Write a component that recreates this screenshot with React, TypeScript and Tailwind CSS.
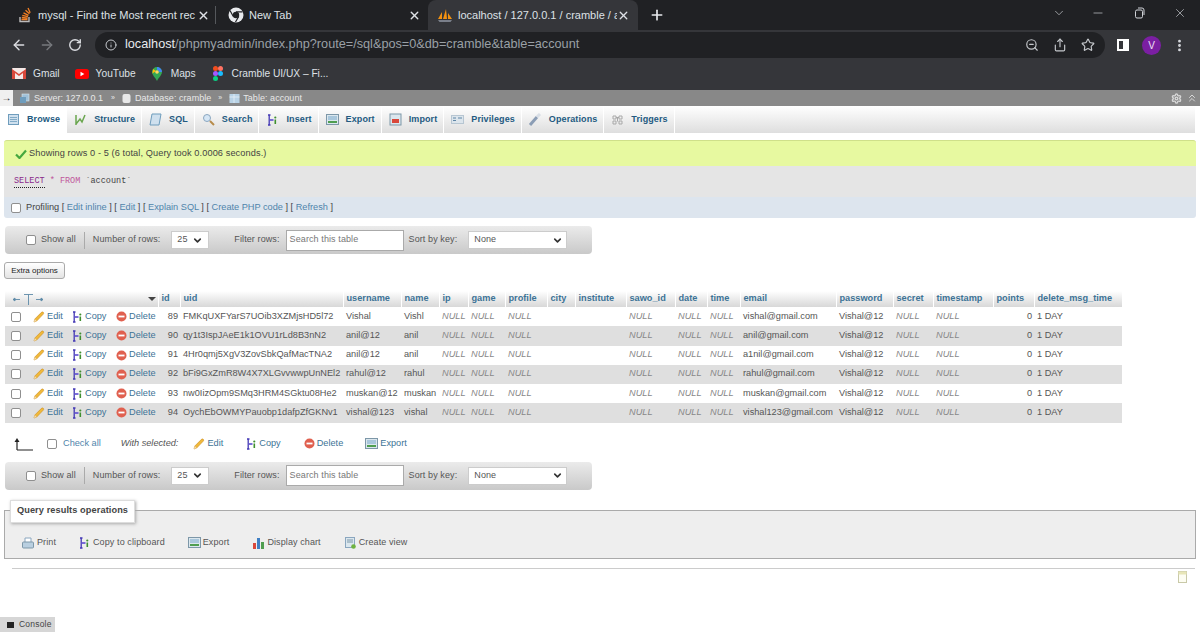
import React from "react";
import { ArrowLeft, ArrowRight, RotateCw, Info, ZoomOut, Share, Star, X, Plus, Minus, ChevronDown, EllipsisVertical, Settings, ChevronsUp } from "lucide-react";

const F = "font-['Liberation_Sans',Arial,sans-serif]";

const Pencil = () => (
  <svg width="12" height="12" viewBox="0 0 12 12" className="shrink-0">
    <path d="M1 11l.8-3L8.5 1.300c.6-.5 1.300-.5 1.800 0s.5 1.200 0 1.800L3.700 10z" fill="#f0b93a" stroke="#c98a1e" strokeWidth=".6" />
    <path d="M1 11l.8-3 1.900 2z" fill="#f3dcb0" />
  </svg>
);
const CopyI = () => (
  <svg width="11" height="12" viewBox="0 0 11 12" className="shrink-0">
    <path d="M1 1h2.500M1 11h2.500M2.200 1v10" stroke="#4338b5" strokeWidth="1.300" fill="none" />
    <path d="M3 6h3.500" stroke="#5a4ad0" strokeWidth="1.600" />
    <circle cx="8.300" cy="3.500" r="1.100" fill="#3f8f2f" />
    <path d="M8.300 5.500v4.500" stroke="#3f8f2f" strokeWidth="1.600" />
  </svg>
);
const Del = () => (
  <svg width="11" height="11" viewBox="0 0 11 11" className="shrink-0">
    <circle cx="5.500" cy="5.500" r="5" fill="#e0604f" />
    <rect x="2.500" y="4.600" width="6" height="1.800" fill="#fff" />
  </svg>
);
const ExportI = () => (
  <svg width="13" height="11" viewBox="0 0 13 11" className="shrink-0">
    <rect x=".5" y=".5" width="12" height="10" fill="#dbe7ee" stroke="#7d97a8" />
    <rect x="2" y="2" width="9" height="4" fill="#a9c7dc" />
    <rect x="2" y="7" width="9" height="2" fill="#4f9e50" />
  </svg>
);
const Box = () => <span className="block h-[10px] w-[10px] shrink-0 rounded-[2px] border border-[#8f8f8f] bg-white" />;

const Tab = ({ icon, label, w, active, iconCl, closeCl }: { icon: React.ReactNode; label: string; w: string; active?: boolean; iconCl: string; closeCl: string }) => (
  <div className={`flex h-full items-center ${w} ${active ? "rounded-t-lg bg-[#35363a]" : ""}`}>
    <span className={`flex shrink-0 ${iconCl}`}>{icon}</span>
    <span className="min-w-0 flex-1 overflow-hidden whitespace-nowrap text-[11px] text-[#dee1e6]">{label}</span>
    <X size={13} strokeWidth={2.500} className={`shrink-0 text-[#dee1e6] ${closeCl}`} />
  </div>
);

const MenuItem = ({ icon, label, active }: { icon: React.ReactNode; label: string; active?: boolean }) => (
  <div className={`flex h-full items-center gap-[7px] border-r border-[#fff] pl-[7px] pr-[6px] text-[9px] font-bold tracking-[0.1px] text-[#235a81] ${active ? "bg-white" : ""}`}>
    <span className="flex w-[13px] shrink-0 justify-center">{icon}</span>
    <span>{label}</span>
  </div>
);

const Sq = ({ c, b }: { c: string; b: string }) => (
  <svg width="13" height="13" viewBox="0 0 13 13" className="shrink-0">
    <rect x="1.500" y="1.500" width="10" height="10" fill={c} stroke={b} />
    <path d="M3 4.500h7M3 6.500h7M3 8.500h7" stroke={b} strokeWidth=".8" />
  </svg>
);

const NavBar = () => (
  <div className="flex h-[28px] w-[587px] items-center rounded-[4px] bg-gradient-to-b from-[#ebebeb] to-[#c9c9c9] text-[9px] tracking-[0.1px] text-[#555]">
    <span className="ml-[21px]"><Box /></span>
    <span className="ml-[5px]">Show all</span>
    <span className="ml-[8px] h-[17px] w-px bg-[#aaa]" />
    <span className="ml-[8px]">Number of rows:</span>
    <span className="ml-[11px] flex h-[18px] w-[38px] items-center justify-between border border-[#ccc] bg-white px-[5px]">25<ChevronDown size={11} strokeWidth={3.500} className="text-[#333]" /></span>
    <span className="ml-[25px]">Filter rows:</span>
    <span className="ml-[6px] flex h-[21px] w-[118px] items-center border border-[#aaa] bg-white px-[3px] text-[#777]">Search this table</span>
    <span className="ml-[5px]">Sort by key:</span>
    <span className="ml-[11px] flex h-[18px] w-[99px] items-center justify-between border border-[#ccc] bg-white pl-[5px] pr-[3px]">None<ChevronDown size={11} strokeWidth={3.500} className="text-[#333]" /></span>
  </div>
);

const cols = [
  ["id", 22], ["uid", 163], ["username", 58], ["name", 38], ["ip", 29], ["game", 37], ["profile", 42], ["city", 28], ["institute", 51],
  ["sawo_id", 49], ["date", 32], ["time", 33], ["email", 96], ["password", 57], ["secret", 40], ["timestamp", 60], ["points", 41], ["delete_msg_time", 88],
] as const;

const rows = [
  ["89", "FMKqUXFYarS7UOib3XZMjsHD5l72", "Vishal", "Vishl", "vishal@gmail.com"],
  ["90", "qy1t3IspJAeE1k1OVU1rLd8B3nN2", "anil@12", "anil", "anil@gmail.com"],
  ["91", "4Hr0qmj5XgV3ZovSbkQafMacTNA2", "anil@12", "anil", "a1nil@gmail.com"],
  ["92", "bFi9GxZmR8W4X7XLGvvwwpUnNEl2", "rahul@12", "rahul", "rahul@gmail.com"],
  ["93", "nw0IizOpm9SMq3HRM4SGktu08He2", "muskan@12", "muskan", "muskan@gmail.com"],
  ["94", "OychEbOWMYPauobp1dafpZfGKNv1", "vishal@123", "vishal", "vishal123@gmail.com"],
];

const Null = () => <td className="overflow-visible whitespace-nowrap p-0 pl-[3px] italic text-[#888]">NULL</td>;

const Act = ({ icon, label, cl }: { icon: React.ReactNode; label: string; cl: string }) => (
  <span className={`flex items-center gap-[2px] text-[#3d7396] ${cl}`}>{icon}{label}</span>
);

const OpBtn = ({ icon, label, cl, gap }: { icon: React.ReactNode; label: string; cl: string; gap: string }) => (
  <span className={`flex items-center ${gap} ${cl}`}>{icon}{label}</span>
);

export default function App() {
  return (
    <div className={`${F} flex h-[632px] w-[1200px] flex-col overflow-hidden bg-white`}>
      {/* tab strip */}
      <div className="flex h-[30px] items-end bg-[#202124]">
        <div className="flex h-[30px]">
          <Tab w="w-[216px] border-r border-[#55585c] my-[6px] !h-[18px]" iconCl="ml-[18px] w-[20px]" closeCl="mr-[5px]" label="mysql - Find the Most recent rec" icon={
            <svg width="14" height="16" viewBox="0 0 14 16"><path d="M2 10v4.500h9V10" stroke="#bcbbbb" fill="none" strokeWidth="1.400" /><path d="M3.500 12.500h6M3.800 10.500l5.800.6M4.300 8.300l5.600 1.400M5.500 5.800l5 2.600M7.500 3.200l4 3.600M10 1l2.200 4.800" stroke="#f48024" strokeWidth="1.300" /></svg>
          } />
          <Tab w="w-[212px]" iconCl="ml-[12px] w-[21px]" closeCl="mr-[7px]" label="New Tab" icon={
            <svg width="16" height="16" viewBox="0 0 16 16"><circle cx="8" cy="8" r="7.500" fill="#e8eaed" /><circle cx="8" cy="8" r="3.200" fill="#202124" /><path d="M8 4.800h6.500M5.300 9.500L2 3.500M10.700 9.500L7.500 15" stroke="#202124" strokeWidth="1.200" /></svg>
          } />
          <Tab active w="w-[210px]" iconCl="ml-[9px] w-[21px]" closeCl="mr-[8px]" label="localhost / 127.0.0.1 / cramble / a" icon={
            <svg width="17" height="15" viewBox="0 0 17 15"><path d="M1 11L5 4v7zM6 11l3-10 1 10zM11 11V5l4 6z" fill="#f29111" /><path d="M1 12h14l-1.500 2h-11z" fill="#7a7f8a" /></svg>
          } />
        </div>
        <Plus size={16} strokeWidth={2.500} className="mb-[7px] ml-[11px] text-[#e8eaed]" />
        <div className="mb-[10px] ml-auto flex items-center text-[#c8cbd0]">
          <ChevronDown size={14} strokeWidth={1.200} className="mr-[25px]" />
          <Minus size={14} strokeWidth={1.200} className="mr-[29px]" />
          <svg width="11" height="12" viewBox="0 0 11 12" fill="none" stroke="#d0d3d8" className="mr-[28px]"><rect x="1.500" y="3" width="7" height="8" rx="1.500" /><path d="M4 1h4a2 2 0 0 1 2 2v5" /></svg>
          <X size={14} strokeWidth={1.200} className="mr-[13px]" />
        </div>
      </div>

      {/* toolbar */}
      <div className="flex h-[30px] items-center bg-[#35363a] text-[#dadce0]">
        <ArrowLeft size={16} className="ml-[11px]" strokeWidth={2.200} />
        <ArrowRight size={16} className="ml-[12px] text-[#77797d]" strokeWidth={2} />
        <RotateCw size={14} className="ml-[13px]" strokeWidth={2.400} />
        <div className="ml-[13px] flex h-[26px] w-[1010px] items-center rounded-full bg-[#202124] pl-[10px]">
          <Info size={12} className="text-[#c6c9ce]" />
          <span className="ml-[8px] text-[12.700px] text-[#9aa0a6]"><span className="text-[#e8eaed]">localhost</span>/phpmyadmin/index.php?route=/sql&amp;pos=0&amp;db=cramble&amp;table=account</span>
          <div className="ml-auto mr-[10px] flex items-center gap-[14px] text-[#c4c7cb]">
            <ZoomOut size={14} />
            <Share size={14} />
            <Star size={14} strokeWidth={2} />
          </div>
        </div>
        <span className="ml-[12px] flex h-[12px] w-[12px] justify-end border-2 border-white"><span className="h-full w-[4px] bg-white" /></span>
        <span className="ml-[13px] flex h-[19px] w-[19px] items-center justify-center rounded-full bg-[#7b1fa2] text-[10px] text-[#f0e0f5]">V</span>
        <EllipsisVertical size={15} strokeWidth={2.500} className="ml-[11px]" />
      </div>

      {/* bookmarks */}
      <div className="flex h-[30px] items-center bg-[#35363a] pb-[3px] text-[10.200px] text-[#dee1e6]">
        <svg width="14" height="11" viewBox="0 0 14 11" className="ml-[12px]"><rect width="14" height="11" rx="1" fill="#f4e9e7" /><path d="M0 1l7 5 7-5v10h-3V5L7 8 3 5v6H0z" fill="#d9483b" /></svg>
        <span className="ml-[7px]">Gmail</span>
        <svg width="14" height="10" viewBox="0 0 14 10" className="ml-[15px]"><rect width="14" height="10" rx="2.500" fill="#f00" /><path d="M5.500 2.800v4.400L9.300 5z" fill="#fff" /></svg>
        <span className="ml-[7px]">YouTube</span>
        <svg width="10" height="14" viewBox="0 0 10 14" className="ml-[16px]"><path d="M5 0a5 5 0 0 1 5 5c0 3-3 5-5 9C3 10 0 8 0 5a5 5 0 0 1 5-5z" fill="#34a853" /><path d="M5 0a5 5 0 0 1 5 5L7 5a2 2 0 0 0-2-2z" fill="#4285f4" /><path d="M1 2l3 2-3.600 2.500z" fill="#fbbc04" /><circle cx="5" cy="5" r="1.800" fill="#fdd663" /></svg>
        <span className="ml-[9px]">Maps</span>
        <svg width="10" height="15" viewBox="0 0 10 15" className="ml-[17px]"><rect x="0" y="0" width="5" height="5" rx="2.500" fill="#f24e1e" /><rect x="5" y="0" width="5" height="5" rx="2.500" fill="#ff7262" /><rect x="0" y="5" width="5" height="5" rx="2.500" fill="#a259ff" /><circle cx="7.500" cy="7.500" r="2.500" fill="#1abcfe" /><rect x="0" y="10" width="5" height="5" rx="2.500" fill="#0acf83" /></svg>
        <span className="ml-[9px]">Cramble UI/UX – Fi...</span>
      </div>

      {/* breadcrumb */}
      <div className="flex h-[16px] items-center bg-[#888] text-[9px] text-[#e8e8e8]">
        <span className="flex h-full w-[13px] items-center justify-center bg-[#f0f0f0] text-[10px] leading-none text-[#222]">→</span>
        <svg width="11" height="11" viewBox="0 0 11 11" className="ml-[6px]"><rect x="3" y="1" width="7" height="7" fill="#9fc0d8" stroke="#dbe7ee" strokeWidth=".6" /><rect x="1" y="4" width="6" height="6" fill="#6f9dbd" /></svg>
        <span className="ml-[4px] pt-[1px]">Server: 127.0.0.1</span>
        <span className="ml-[8px] text-[7px]">»</span>
        <svg width="9" height="11" viewBox="0 0 9 11" className="ml-[7px]"><rect x=".5" y="1" width="8" height="9" rx="2" fill="#e8e8e8" /></svg>
        <span className="ml-[4px] pt-[1px] tracking-[0.05px]">Database: cramble</span>
        <span className="ml-[7px] text-[7px]">»</span>
        <svg width="11" height="11" viewBox="0 0 11 11" className="ml-[7px]"><rect x=".5" y="1" width="10" height="9" fill="#b9d3e6" /><path d="M.5 4h10M5 1v9" stroke="#eef4f8" strokeWidth=".7" /></svg>
        <span className="ml-[3px] pt-[1px] tracking-[0.05px]">Table: account</span>
        <Settings size={11} className="ml-auto text-[#d8d8d8]" strokeWidth={3} />
        <ChevronsUp size={12} className="ml-[4px] mr-[2px] text-[#d8d8d8]" />
      </div>

      {/* menu */}
      <div className="mr-[5px] flex h-[27px] bg-gradient-to-b from-white to-[#dedede]">
        <MenuItem active label="Browse" icon={<Sq c="#cfe0ee" b="#6f9dbd" />} />
        <MenuItem label="Structure" icon={<svg width="13" height="13" viewBox="0 0 13 13" className="shrink-0"><path d="M2 2v10M2 11l4-5 2 3 3-7" stroke="#6aa64f" strokeWidth="1.500" fill="none" /></svg>} />
        <MenuItem label="SQL" icon={<svg width="13" height="13" viewBox="0 0 13 13" className="shrink-0"><path d="M3 1h9L10 12H1z" fill="#cfe0ee" stroke="#6f9dbd" /></svg>} />
        <MenuItem label="Search" icon={<svg width="13" height="13" viewBox="0 0 13 13" className="shrink-0"><circle cx="5" cy="5" r="3.500" fill="#d5e6f5" stroke="#8aa6bf" /><path d="M8 8l4 4" stroke="#b78b4a" strokeWidth="2" /></svg>} />
        <MenuItem label="Insert" icon={<CopyI />} />
        <MenuItem label="Export" icon={<ExportI />} />
        <MenuItem label="Import" icon={<svg width="13" height="13" viewBox="0 0 13 13" className="shrink-0"><rect x="1" y="1" width="11" height="11" fill="#dbe7ee" stroke="#7d97a8" /><rect x="3" y="6" width="7" height="4" fill="#d9483b" /></svg>} />
        <MenuItem label="Privileges" icon={<svg width="13" height="11" viewBox="0 0 13 11" className="shrink-0"><rect x=".5" y="1.500" width="12" height="8" fill="#dce5ec" stroke="#b7c6d2" /><path d="M2 4h3M2 6.500h3M7 4h4" stroke="#5f86a6" /></svg>} />
        <MenuItem label="Operations" icon={<svg width="14" height="14" viewBox="0 0 14 14" className="shrink-0"><path d="M2 12l7-8" stroke="#8b9db5" strokeWidth="3" /><path d="M9 4l3-3" stroke="#d8dee6" strokeWidth="3" /></svg>} />
        <MenuItem label="Triggers" icon={<svg width="11" height="11" viewBox="0 0 11 11" className="shrink-0"><path d="M1 2h3v3H1zM7 2h3v3H7zM1 7h3v3H1zM7 7h3v3H7zM4 3.500h3M5.500 3.500v4" fill="none" stroke="#a8a8a8" /></svg>} />
      </div>

      {/* message */}
      <div className="ml-[4px] mr-[4px] mt-[7px] flex h-[26px] items-center rounded-t-[3px] border-t border-[#cfe08a] bg-[#e7f9a0] pl-[11px] pt-[1px] text-[9.200px] tracking-[0.1px] text-[#444]">
        <svg width="12" height="10" viewBox="0 0 12 10"><path d="M1 5.500L4.500 9 11 1.500" stroke="#46a83f" strokeWidth="2.200" fill="none" /></svg>
        <span className="ml-[2px]">Showing rows 0 - 5 (6 total, Query took 0.0006 seconds.)</span>
      </div>
      <div className="ml-[4px] mr-[4px] flex h-[31px] items-center bg-[#e5e5e5] pl-[10px] font-['Liberation_Mono',monospace] text-[8.500px]">
        <span className="border-b border-dotted border-[#222] leading-[11px] text-[#8a2a8a]">SELECT</span>
        <span className="text-[#c0569b]">&nbsp;*&nbsp;FROM&nbsp;</span>
        <span className="text-[#444]">`account`</span>
      </div>
      <div className="ml-[4px] mr-[4px] flex h-[21px] items-center rounded-b-[3px] bg-[#dde5ee] pl-[7px] text-[9.200px] text-[#444]">
        <Box />
        <span className="ml-[5px]">Profiling [ <span className="text-[#4f84ab]">Edit inline</span> ] [ <span className="text-[#4f84ab]">Edit</span> ] [ <span className="text-[#4f84ab]">Explain SQL</span> ] [ <span className="text-[#4f84ab]">Create PHP code</span> ] [ <span className="text-[#4f84ab]">Refresh</span> ]</span>
      </div>

      <div className="ml-[5px] mt-[8px]"><NavBar /></div>

      <div className="ml-[4px] mt-[8px]">
        <span className="flex h-[17px] w-[61px] items-center justify-center rounded-[3px] border border-[#aaa] bg-gradient-to-b from-white to-[#e4e4e4] text-[8px] text-[#222]">Extra options</span>
      </div>

      {/* table */}
      <table className="ml-[5px] mt-[12px] w-[1117px] table-fixed border-collapse text-[9.200px] text-[#555]">
        <colgroup>
          <col className="w-[23px]" /><col className="w-[39px]" /><col className="w-[44px]" /><col className="w-[47px]" />
          {cols.map(([n, w]) => <col key={n} style={{ width: w }} />)}
        </colgroup>
        <thead>
          <tr className="h-[16px] bg-gradient-to-b from-white to-[#d8d8d8]">
            <th colSpan={4} className="border-r border-white p-0">
              <div className="flex items-center">
                <svg width="36" height="13" viewBox="0 0 36 13" className="ml-[4px]">
                  <path d="M4 6.500h7M4 6.500l2-1.500v3zM15 1.500h9M19.500 1.500v10.500M27 6.500h7M34 6.500l-2-1.500v3z" stroke="#5e8aa8" fill="#5e8aa8" strokeWidth=".9" />
                </svg>
                <span className="ml-auto mr-[2px] h-0 w-0 border-x-[4px] border-t-[4px] border-x-transparent border-t-[#444]" />
              </div>
            </th>
            {cols.map(([n]) => (
              <th key={n} className="whitespace-nowrap border-r border-white p-0 pb-[1px] pl-[3px] text-left font-bold text-[#3d7396]">{n}</th>
            ))}
          </tr>
        </thead>
        <tbody>
          {rows.map((r, i) => (
            <tr key={r[0]} className={`h-[19.250px] ${i % 2 ? "bg-[#dfdfdf]" : "bg-white"}`}>
              <td className="p-0 pl-[6px]"><Box /></td>
              <td className="p-0"><Act cl="ml-[5px]" icon={<Pencil />} label="Edit" /></td>
              <td className="p-0"><Act cl="ml-[5px]" icon={<CopyI />} label="Copy" /></td>
              <td className="p-0"><Act cl="ml-[5px]" icon={<Del />} label="Delete" /></td>
              <td className="p-0 pr-[2px] text-right">{r[0]}</td>
              <td className="overflow-hidden whitespace-nowrap p-0 pl-[3px]">{r[1]}</td>
              <td className="whitespace-nowrap p-0 pl-[3px]">{r[2]}</td>
              <td className="whitespace-nowrap p-0 pl-[3px]">{r[3]}</td>
              <Null /><Null /><Null />
              <td /><td />
              <Null /><Null /><Null />
              <td className="whitespace-nowrap p-0 pl-[3px]">{r[4]}</td>
              <td className="whitespace-nowrap p-0 pl-[3px]">Vishal@12</td>
              <Null /><Null />
              <td className="p-0 pr-[2px] text-right">0</td>
              <td className="whitespace-nowrap p-0 pl-[3px]">1 DAY</td>
            </tr>
          ))}
        </tbody>
      </table>

      {/* with selected */}
      <div className="mt-[14px] flex h-[15px] items-center text-[9.200px] text-[#3d7396]">
        <svg width="20" height="13" viewBox="0 0 20 13" className="ml-[14px]"><path d="M3 12V3M19 12H3" stroke="#222" strokeWidth="1.200" /><path d="M3 0l-2.500 4h5z" fill="#222" /></svg>
        <span className="ml-[13px]"><Box /></span>
        <span className="ml-[6px] text-[#4f84ab]">Check all</span>
        <span className="ml-[20px] italic text-[#555]">With selected:</span>
        <Act cl="ml-[15px]" icon={<Pencil />} label="Edit" />
        <Act cl="ml-[23px]" icon={<CopyI />} label="Copy" />
        <Act cl="ml-[23px]" icon={<Del />} label="Delete" />
        <Act cl="ml-[22px]" icon={<ExportI />} label="Export" />
      </div>

      <div className="ml-[5px] mt-[10px]"><NavBar /></div>

      {/* fieldset */}
      <div className="relative ml-[4px] mr-[4px] mt-[20px] flex h-[49px] items-center border border-[#aaa] bg-[#eee] pl-[17px] pt-[17px] text-[9px] tracking-[0.1px] text-[#555]">
        <span className="absolute -top-[11px] left-[5px] flex h-[23px] w-[125px] items-center justify-center border border-[#ddd] bg-white text-[9.200px] font-bold text-[#444] shadow-[1px_1px_3px_#aaa]">Query results operations</span>
        <OpBtn cl="" gap="gap-[3px]" label="Print" icon={<svg width="12" height="12" viewBox="0 0 12 12"><path d="M3 5V1h6v4" fill="#fff" stroke="#8aa6bf" /><rect x=".5" y="5" width="11" height="6" rx="1" fill="#b9cfe0" stroke="#7d97a8" /></svg>} />
        <OpBtn cl="ml-[23px]" gap="gap-[3px]" label="Copy to clipboard" icon={<CopyI />} />
        <OpBtn cl="ml-[23px]" gap="gap-[2px]" label="Export" icon={<ExportI />} />
        <OpBtn cl="ml-[24px]" gap="gap-[3px]" label="Display chart" icon={<svg width="11" height="12" viewBox="0 0 11 12"><rect x="0" y="6" width="3" height="6" fill="#d9483b" /><rect x="4" y="1" width="3" height="11" fill="#3f7fc4" /><rect x="8" y="5" width="3" height="7" fill="#4f9e50" /></svg>} />
        <OpBtn cl="ml-[24px]" gap="gap-[3px]" label="Create view" icon={<svg width="11" height="12" viewBox="0 0 11 12"><rect x=".5" y=".5" width="9" height="10" fill="#dbe7ee" stroke="#8aa6bf" /><path d="M2 3h6M2 5h6" stroke="#7d97a8" /><circle cx="8.500" cy="9.500" r="2.300" fill="#6fb33f" /></svg>} />
      </div>

      <div className="ml-[12px] mr-[5px] mt-[9px] h-px bg-[#ccc]" />

      <div className="mr-[13px] mt-[1px] flex justify-end">
        <svg width="9" height="12" viewBox="0 0 9 12" className="mt-[1px]"><rect x=".5" y=".5" width="8" height="11" fill="#fdfdf2" stroke="#c9c9a8" /><rect x=".5" y=".5" width="8" height="3" fill="#e8e6b8" /></svg>
      </div>

      <div className="mt-auto flex h-[15px] w-[55px] items-center bg-[#d6d6d6] pl-[7px] text-[8.500px] tracking-[0.2px] text-[#444]">
        <span className="h-[6px] w-[7px] bg-[#222]" />
        <span className="ml-[5px]">Console</span>
      </div>
    </div>
  );
}
